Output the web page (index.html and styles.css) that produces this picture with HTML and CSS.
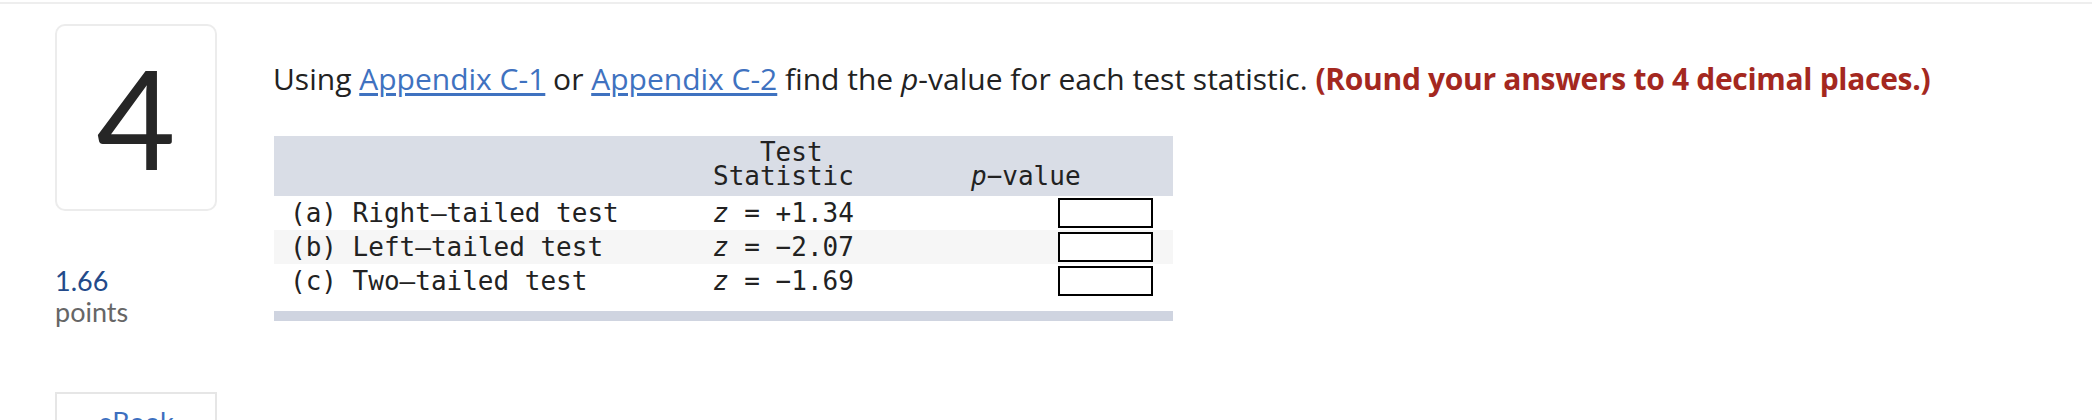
FILE: index.html
```html
<!DOCTYPE html>
<html lang="en">
<head>
<meta charset="utf-8">
<title>Question 4</title>
<link rel="stylesheet" href="styles.css">
</head>
<body>
<div class="topbar"></div>
<div class="question">
  <aside class="side">
    <div class="qnum">4</div>
    <div class="points">
      <span class="pts-val">1.66</span>
      <span class="pts-label">points</span>
    </div>
    <div class="ebook">eBook</div>
  </aside>
  <main class="content">
    <p class="prompt">Using <a href="#">Appendix C-1</a> or <a href="#">Appendix C-2</a> find the <i>p</i>-value for each test statistic. <strong class="note">(Round your answers to 4 decimal places.)</strong></p>
    <div class="table">
      <div class="row head">
        <div class="cell label"></div>
        <div class="cell stat pre">   Test
Statistic</div>
        <div class="cell pval"><i>p</i>−value</div>
      </div>
      <div class="row">
        <div class="cell label pre">(a) Right–tailed test</div>
        <div class="cell stat pre"><i>z</i> = +1.34</div>
        <div class="cell pval"><input class="answer" type="text"></div>
      </div>
      <div class="row alt">
        <div class="cell label pre">(b) Left–tailed test</div>
        <div class="cell stat pre"><i>z</i> = −2.07</div>
        <div class="cell pval"><input class="answer" type="text"></div>
      </div>
      <div class="row">
        <div class="cell label pre">(c) Two–tailed test</div>
        <div class="cell stat pre"><i>z</i> = −1.69</div>
        <div class="cell pval"><input class="answer" type="text"></div>
      </div>
      <div class="table-end"></div>
    </div>
  </main>
</div>
</body>
</html>
```

FILE: styles.css
```css
html, body {
  margin: 0;
  padding: 0;
  background: #fff;
}

body {
  font-family: "Lato", "Liberation Sans", sans-serif;
  color: #222;
}

.topbar {
  margin-top: 2px;
  height: 2px;
  background: #eeeeee;
}

.question {
  display: flex;
  padding-top: 20px;
}

.side {
  margin-left: 55px;
  width: 162px;
  flex: none;
  display: flex;
  flex-direction: column;
}

.qnum {
  box-sizing: border-box;
  height: 187px;
  border: 2px solid #ececec;
  border-radius: 10px;
  display: flex;
  align-items: center;
  justify-content: center;
  font-size: 137px;
  line-height: 1;
  color: #262626;
}

.points {
  margin-top: 54px;
  display: flex;
  flex-direction: column;
  font-size: 27px;
  line-height: 31px;
}

.pts-val {
  color: #234a8a;
}

.pts-label {
  color: #666;
}

.ebook {
  margin-top: 65px;
  box-sizing: border-box;
  border: 2px solid #e6e6e6;
  padding: 12px 0;
  height: 70px;
  text-align: center;
  font-size: 27px;
  line-height: 31px;
  color: #3d6fbf;
}

.content {
  margin-left: 56px;
  flex: none;
}

.prompt {
  margin: 37px 0 39px;
  font-family: "Open Sans", "Lato", sans-serif;
  font-size: 30px;
  line-height: 36px;
  color: #222;
  white-space: nowrap;
}

.prompt a {
  color: #3f72c0;
  text-decoration: underline;
  text-underline-offset: 3px;
}

.note {
  color: #a4281f;
  font-weight: 700;
  letter-spacing: -0.3px;
}

.table {
  width: 899px;
  margin-left: 1px;
  font-family: "DejaVu Sans Mono", monospace;
  font-size: 26px;
  line-height: 24px;
  color: #222;
}

.row {
  display: grid;
  grid-template-columns: 439px 250px 1fr;
  height: 34px;
  align-items: center;
}

.row.head {
  height: 60px;
  box-sizing: border-box;
  padding: 4px 0 8px;
  align-items: end;
  background: #d9dde6;
}

.row.alt {
  background: #f6f6f6;
}

.pre {
  white-space: pre;
}

.label {
  padding-left: 16px;
}

.pval {
  display: flex;
  justify-content: flex-start;
  padding-left: 8px;
}

.row:not(.head) .pval {
  justify-content: flex-end;
  padding-right: 20px;
  padding-left: 0;
}

.answer {
  box-sizing: border-box;
  width: 95px;
  height: 30px;
  margin: 0;
  padding: 0;
  border: 2px solid #000;
  border-radius: 0;
  background: #fff;
}

.table-end {
  margin-top: 13px;
  height: 10px;
  background: #cfd4e0;
}
```
